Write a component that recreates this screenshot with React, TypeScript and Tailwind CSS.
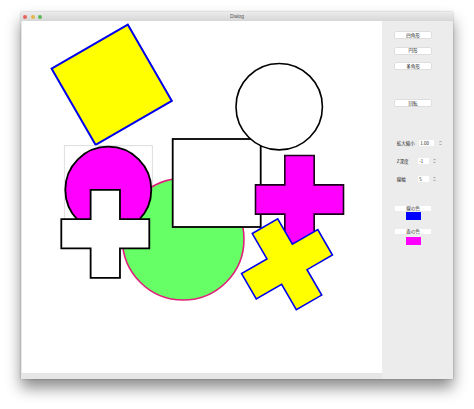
import React from "react";

const A = 44;
const T = 44 / 3;

// plus shape centred on the origin, 88 across
const crossPoints = [
	[-T, -A], [T, -A], [T, -T], [A, -T], [A, T], [T, T],
	[T, A], [-T, A], [-T, T], [-A, T], [-A, -T], [-T, -T],
]
	.map(([x, y]) => `${x.toFixed(2)},${y.toFixed(2)}`)
	.join(" ");

function Canvas() {
	return (
		<svg width="360" height="352" viewBox="0 0 360 352" className="block">
			<rect
				x="-44"
				y="-44"
				width="88"
				height="88"
				transform="translate(89.7 63.8) rotate(-30)"
				fill="#ffff00"
				stroke="#0000ee"
				strokeWidth="2"
			/>
			<rect x="42.3" y="124.7" width="88" height="88" fill="none" stroke="#d4d4d4" strokeWidth="0.8" />
			<circle cx="161.2" cy="218.2" r="60.8" fill="#66ff66" stroke="#e0207a" strokeWidth="1.6" />
			<circle cx="86.3" cy="168.7" r="43" fill="#ff00ff" stroke="#000" strokeWidth="1.8" />
			<polygon points={crossPoints} transform="translate(83.3 212.8)" fill="#fff" stroke="#000" strokeWidth="1.8" />
			<rect x="150.7" y="118" width="88" height="88" fill="#fff" stroke="#000" strokeWidth="1.8" />
			<circle cx="257.2" cy="85.7" r="43.2" fill="#fff" stroke="#000" strokeWidth="1.6" />
			<polygon points={crossPoints} transform="translate(277.5 178.5)" fill="#ff00ff" stroke="#1a001a" strokeWidth="1.6" />
			<polygon
				points={crossPoints}
				transform="translate(265 243.3) rotate(-30)"
				fill="#ffff00"
				stroke="#0000ee"
				strokeWidth="1.6"
			/>
		</svg>
	);
}

function PanelButton({ label }: { label: string }) {
	return (
		<div className="w-[36px] h-[6px] bg-white rounded-[1px] shadow-[0_0_0_0.5px_#d0d0d0] flex items-center justify-center text-[4.5px] leading-none text-[#222]">
			{label}
		</div>
	);
}

function Stepper() {
	return (
		<svg width="3" height="6" viewBox="0 0 3 6" className="block">
			<path d="M0.4 2.2 L1.5 1 L2.6 2.2 M0.4 3.8 L1.5 5 L2.6 3.8" fill="none" stroke="#777" strokeWidth="0.6" />
		</svg>
	);
}

function SpinRow({ label, value, boxW, gap }: { label: string; value: string; boxW: string; gap: string }) {
	return (
		<div className="flex items-center h-[6px] pl-[1.7px]">
			<div className="w-[22px] text-[4.5px] leading-none text-[#222] whitespace-nowrap">{label}</div>
			<div
				className={`h-[5.5px] bg-white ${boxW} flex items-center pl-[1.5px] text-[4.5px] leading-none text-[#222]`}
			>
				{value}
			</div>
			<div className={gap}>
				<Stepper />
			</div>
		</div>
	);
}

function Panel() {
	return (
		<div
			className="w-[71px] bg-[#ececec] flex flex-col items-start pl-[13px] pt-[11px]"
			style={{ fontFamily: '"Noto Sans CJK JP", "Noto Sans", sans-serif' }}
		>
			<PanelButton label="四角形" />
			<div className="mt-[9.5px]">
				<PanelButton label="円形" />
			</div>
			<div className="mt-[9.5px]">
				<PanelButton label="多角形" />
			</div>
			<div className="mt-[31px]">
				<PanelButton label="回転" />
			</div>
			<div className="mt-[34px] flex flex-col gap-[12px]">
				<SpinRow label="拡大縮小" value="1.00" boxW="w-[15px]" gap="ml-[5px]" />
				<SpinRow label="Z深度" value="-1" boxW="w-[11px] ml-[-1px]" gap="ml-[4px]" />
				<SpinRow label="線幅" value="5" boxW="w-[11px] ml-[-1px]" gap="ml-[4px]" />
			</div>
			<div className="mt-[23.5px] flex flex-col items-center w-[36px]">
				<div className="w-[36px] h-[5px] bg-white flex items-center justify-center text-[4.5px] leading-none text-[#222]">
					線の色
				</div>
				<div className="mt-[1.5px] w-[15px] h-[8px] bg-[#0000ff]" />
				<div className="mt-[9px] w-[36px] h-[5px] bg-white flex items-center justify-center text-[4.5px] leading-none text-[#222]">
					面の色
				</div>
				<div className="mt-[3px] w-[15px] h-[8px] bg-[#ff00ff]" />
			</div>
		</div>
	);
}

export default function App() {
	return (
		<div className="w-[474px] h-[409px] bg-white pt-[12px] pl-[21px] overflow-hidden">
			<div className="w-[432px] h-[367px] flex flex-col bg-[#ececec] shadow-[0_9px_14px_rgba(0,0,0,0.45),0_0_2px_rgba(0,0,0,0.25)]">
				<div className="relative h-[9px] bg-gradient-to-b from-[#ececec] to-[#d6d6d6] flex items-center pl-[2px] gap-[3.7px]">
					<div className="w-[4px] h-[4px] rounded-full bg-[#e8625c]" />
					<div className="w-[4px] h-[4px] rounded-full bg-[#e5b74a]" />
					<div className="w-[4px] h-[4px] rounded-full bg-[#5cb85a]" />
					<div
						className="absolute inset-0 flex items-center justify-center text-[5px] leading-none text-[#555]"
						style={{ fontFamily: '"Liberation Sans", sans-serif' }}
					>
						Dialog
					</div>
				</div>
				<div className="flex-1 flex">
					<div className="pl-px pb-[6px] bg-[#e6e6e6]">
						<div className="w-[360px] h-[352px] bg-white">
							<Canvas />
						</div>
					</div>
					<Panel />
				</div>
			</div>
		</div>
	);
}
